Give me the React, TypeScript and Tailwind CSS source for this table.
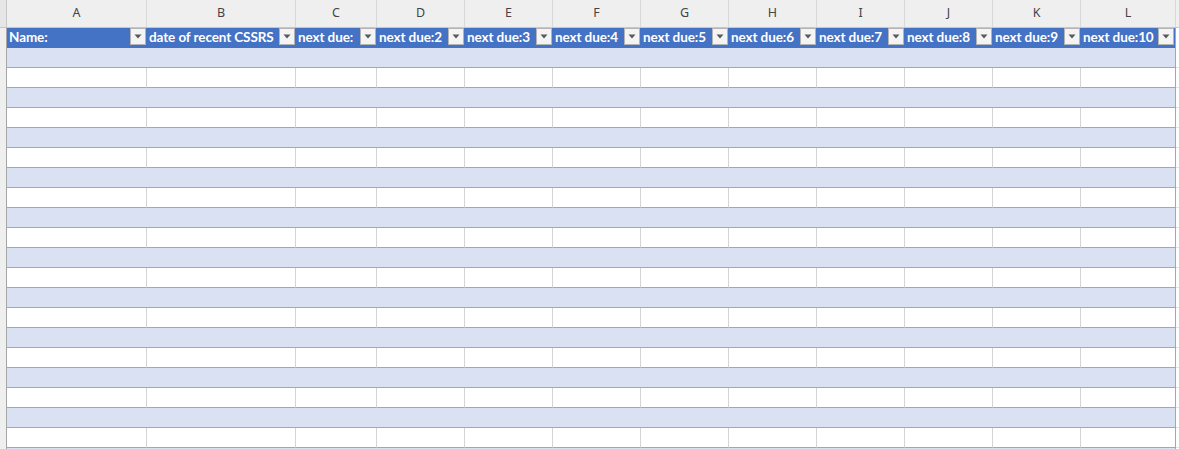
const columns = [
  { letter: "A", width: "w-[140px]", title: "Name:" },
  { letter: "B", width: "w-[149px]", title: "date of recent CSSRS" },
  { letter: "C", width: "w-[81px]", title: "next due:" },
  { letter: "D", width: "w-[88px]", title: "next due:2" },
  { letter: "E", width: "w-[88px]", title: "next due:3" },
  { letter: "F", width: "w-[88px]", title: "next due:4" },
  { letter: "G", width: "w-[88px]", title: "next due:5" },
  { letter: "H", width: "w-[88px]", title: "next due:6" },
  { letter: "I", width: "w-[88px]", title: "next due:7" },
  { letter: "J", width: "w-[88px]", title: "next due:8" },
  { letter: "K", width: "w-[88px]", title: "next due:9" },
  { letter: "L", width: "w-[95px]", title: "next due:10" },
];

const rows = Array.from({ length: 21 }, (_, i) => i + 2);

function FilterButton() {
  return (
    <span className="ml-auto flex h-[17px] w-[16px] shrink-0 items-center justify-center border border-[#b4b4b4] bg-[#f4f4f4]">
      <svg width="8" height="5" viewBox="0 0 8 5">
        <path d="M0.5 0.5 L7.5 0.5 L4 4.5 Z" fill="#595959" />
      </svg>
    </span>
  );
}

export default function App() {
  return (
    <div className="h-[449px] w-[1179px] overflow-hidden bg-white font-['Lato','Liberation_Sans',sans-serif]">
      {/* column letters */}
      <div className="flex h-[28px] border-b border-[#c6c6c6] bg-[#efefef]">
        <div className="w-[7px] shrink-0 border-r border-[#c6c6c6] bg-[#e6e6e6]" />
        {columns.map((c) => (
          <div
            key={c.letter}
            className={`${c.width} shrink-0 border-r border-[#d9d9d9] pt-[5px] text-center font-['Noto_Sans',sans-serif] text-[12.5px] leading-[16px] text-[#444]`}
          >
            {c.letter}
          </div>
        ))}
        <div className="flex-1" />
      </div>

      {/* table header */}
      <div className="flex h-[20px]">
        <div className="w-[7px] shrink-0 border-r border-[#a6a6a6] bg-[#efefef]" />
        {columns.map((c) => (
          <div
            key={c.letter}
            className={`${c.width} flex shrink-0 items-start bg-[#4472c4] pr-[1px] ${c.letter === "L" ? "border-r border-[#8ea9db]" : ""}`}
          >
            <span className="whitespace-nowrap pl-[2px] text-[13.5px] font-bold leading-[19px] tracking-[-0.1px] text-white">
              {c.title}
            </span>
            <FilterButton />
          </div>
        ))}
        <div className="flex-1" />
      </div>

      {/* data rows */}
      {rows.map((r, i) => {
        const banded = i % 2 === 0;
        return (
          <div key={r} className="flex h-[20px]">
            <div className="w-[7px] shrink-0 border-r border-[#a6a6a6] bg-[#efefef]" />
            {columns.map((c) => (
              <div
                key={c.letter}
                className={`${c.width} shrink-0 border-b border-[#8ea9db] ${
                  banded ? "bg-[#d9e1f2]" : "bg-white"
                } ${
                  c.letter === "L"
                    ? "border-r border-r-[#8ea9db]"
                    : banded
                    ? ""
                    : "border-r border-r-[#d4d4d4]"
                }`}
              />
            ))}
            <div className="flex-1 border-b border-[#e1e1e1]" />
          </div>
        );
      })}
    </div>
  );
}
